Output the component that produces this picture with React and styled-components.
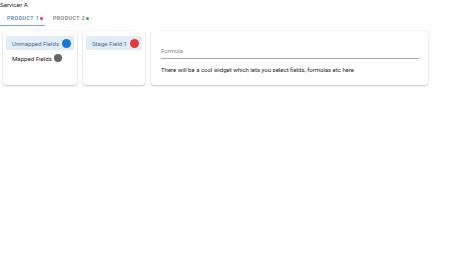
import React from 'react';
import styled, { createGlobalStyle } from 'styled-components';

const GlobalStyle = createGlobalStyle`
  body {
    margin: 0;
    background: #ffffff;
    font-family: Roboto, "Liberation Sans", sans-serif;
  }
`;

const App = () => {
  return (
    <Page>
      <GlobalStyle />
      <Title>Servicer A</Title>
      <TabBar>
        <Tab active>
          PRODUCT 1<Dot color="#e53935" size={3} />
          {/* indicator only under the selected tab */}
          <Indicator />
        </Tab>
        <Tab>
          PRODUCT 2<Dot color="#43a047" size={3} />
        </Tab>
      </TabBar>
      <Board>
        <Card width="74px">
          <Chip selected>
            Unmapped Fields <Dot color="#1976d2" size={9} />
          </Chip>
          <Chip>
            Mapped Fields <Dot color="#666666" size={8} />
          </Chip>
        </Card>
        <Card width="62px">
          <Chip selected>
            Stage Field 1 <Dot color="#e53935" size={9} />
          </Chip>
        </Card>
        <Card width="277px" wide>
          <FieldLabel>Formula</FieldLabel>
          <Underline />
          <Note>There will be a cool widget which lets you select fields, formulas etc here</Note>
        </Card>
      </Board>
    </Page>
  );
};

const Page = styled.div`
  width: 474px;
  height: 266px;
`;

const Title = styled.div`
  font-size: 6.2px;
  line-height: 10px;
  color: #222;
`;

const TabBar = styled.div`
  display: flex;
  height: 16px;
`;

const Tab = styled.div`
  position: relative;
  display: flex;
  align-items: center;
  box-sizing: border-box;
  white-space: nowrap;
  width: ${(p) => (p.active ? '46px' : '48px')};
  padding-left: 7px;
  font-size: 5.3px;
  font-weight: 500;
  letter-spacing: 0.45px;
  color: ${(p) => (p.active ? '#4d7bb3' : '#777777')};
`;

const Indicator = styled.div`
  position: absolute;
  left: 0;
  right: 1px;
  bottom: 0;
  height: 1.5px;
  background: #7aa3cc;
`;

const Dot = styled.span`
  display: inline-block;
  flex: none;
  width: ${(p) => p.size}px;
  height: ${(p) => p.size}px;
  border-radius: 50%;
  background: ${(p) => p.color};
  margin-left: ${(p) => (p.size > 4 ? '2.5px' : '1px')};
`;

const Board = styled.div`
  display: flex;
  align-items: flex-start;
  gap: 5px;
  padding: 5px 3px;
`;

const Card = styled.div`
  box-sizing: border-box;
  width: ${(p) => p.width};
  height: 54px;
  padding: ${(p) => (p.wide ? '16px 9px 0 10px' : '5px 3px')};
  margin-right: ${(p) => (p.wide ? '0' : '1px')};
  background: #fff;
  border-radius: 3px;
  box-shadow: 0 1px 2px rgba(0, 0, 0, 0.22), 0 0 1px rgba(0, 0, 0, 0.12);
`;

const Chip = styled.div`
  display: flex;
  align-items: center;
  height: 14px;
  padding: 0 0 0 6px;
  border-radius: 1px;
  font-size: 6.1px;
  color: ${(p) => (p.selected ? '#4a6b9c' : '#222')};
  background: ${(p) => (p.selected ? '#e3edf8' : 'transparent')};
  margin-bottom: 1px;
`;

const FieldLabel = styled.div`
  font-size: 6px;
  color: #888;
  line-height: 8px;
`;

const Underline = styled.div`
  height: 1px;
  background: #aaaaaa;
  margin-top: 3px;
`;

const Note = styled.div`
  font-size: 6px;
  color: #222;
  margin-top: 7px;
`;

export default App;
